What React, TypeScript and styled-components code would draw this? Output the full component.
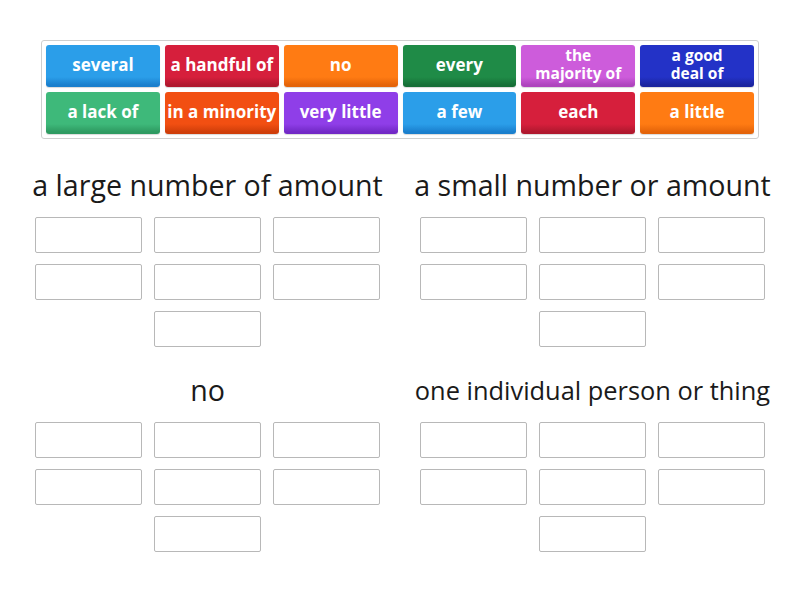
import styled, { createGlobalStyle } from "styled-components";

const GlobalStyle = createGlobalStyle`
  body {
    margin: 0;
    background: #fff;
    font-family: "Open Sans", "Liberation Sans", sans-serif;
  }
`;

const Page = styled.div`
  box-sizing: border-box;
  width: 800px;
  height: 600px;
  padding-top: 40px;
`;

const Tray = styled.div`
  box-sizing: border-box;
  width: 718px;
  margin-left: 41px;
  padding: 4px;
  border: 1px solid #cfcfcf;
  border-radius: 3px;
  display: grid;
  grid-template-columns: repeat(6, 1fr);
  gap: 5px 5px;
`;

const Tile = styled.div<{ $color: string; $shade: string }>`
  box-sizing: border-box;
  height: 42px;
  padding-bottom: 2px;
  border-radius: 3px;
  background: linear-gradient(to bottom, ${(p) => p.$color} 0%, ${(p) => p.$color} 80%, ${(p) => p.$shade} 100%);
  border-bottom: 2px solid ${(p) => p.$shade};
  box-shadow: 0 1px 1px rgba(0, 0, 0, 0.15);
  color: #fff;
  font-weight: 700;
  font-size: 17px;
  line-height: 1;
  display: flex;
  align-items: center;
  justify-content: center;
  text-align: center;
  white-space: nowrap;
`;

const TwoLine = styled.span`
  font-size: 15.5px;
  line-height: 18px;
  white-space: pre-line;
`;

const Groups = styled.div`
  display: grid;
  grid-template-columns: 385px 385px;
  margin-left: 15px;
  margin-top: 29px;
  row-gap: 26px;
`;

const Group = styled.div`
  display: flex;
  flex-direction: column;
  align-items: center;
`;

const Heading = styled.div<{ $size?: number }>`
  font-size: ${(p) => p.$size ?? 28.6}px;
  line-height: 34px;
  color: #1a1a1a;
  white-space: nowrap;
  margin-bottom: 15px;
`;

const Slots = styled.div`
  width: 346px;
  display: flex;
  flex-wrap: wrap;
  justify-content: center;
  gap: 11px 12px;
`;

const Slot = styled.div`
  box-sizing: border-box;
  width: 107px;
  height: 36px;
  border: 1px solid #b8b8b8;
  border-radius: 2px;
  background: #fff;
`;

type TileData = { label: string; color: string; shade: string; wrap?: boolean };

const tiles: TileData[] = [
  { label: "several", color: "#2b9ee9", shade: "#1a7fcd" },
  { label: "a handful of", color: "#d61f3c", shade: "#b0182e" },
  { label: "no", color: "#ff7b13", shade: "#e4640a" },
  { label: "every", color: "#1f8b47", shade: "#166f37" },
  { label: "the\nmajority of", color: "#cd5cdb", shade: "#ae44bd", wrap: true },
  { label: "a good\ndeal of", color: "#2332c7", shade: "#1a249f", wrap: true },
  { label: "a lack of", color: "#3eb97a", shade: "#2e9a61" },
  { label: "in a minority", color: "#f24f12", shade: "#cf3e0a" },
  { label: "very little", color: "#8f3ee8", shade: "#7229c6" },
  { label: "a few", color: "#2b9ee9", shade: "#1a7fcd" },
  { label: "each", color: "#d61f3c", shade: "#b0182e" },
  { label: "a little", color: "#ff7b13", shade: "#e4640a" },
];

const headings: { text: string; size?: number }[] = [
  { text: "a large number of amount" },
  { text: "a small number or amount" },
  { text: "no" },
  { text: "one individual person or thing", size: 25.4 },
];

export default function App() {
  return (
    <Page>
      <GlobalStyle />
      <Tray>
        {tiles.map((t) => (
          <Tile key={t.label} $color={t.color} $shade={t.shade}>
            {t.wrap ? <TwoLine>{t.label}</TwoLine> : t.label}
          </Tile>
        ))}
      </Tray>
      <Groups>
        {headings.map((h) => (
          <Group key={h.text}>
            <Heading $size={h.size}>{h.text}</Heading>
            <Slots>
              {Array.from({ length: 7 }).map((_, i) => (
                <Slot key={i} />
              ))}
            </Slots>
          </Group>
        ))}
      </Groups>
    </Page>
  );
}
